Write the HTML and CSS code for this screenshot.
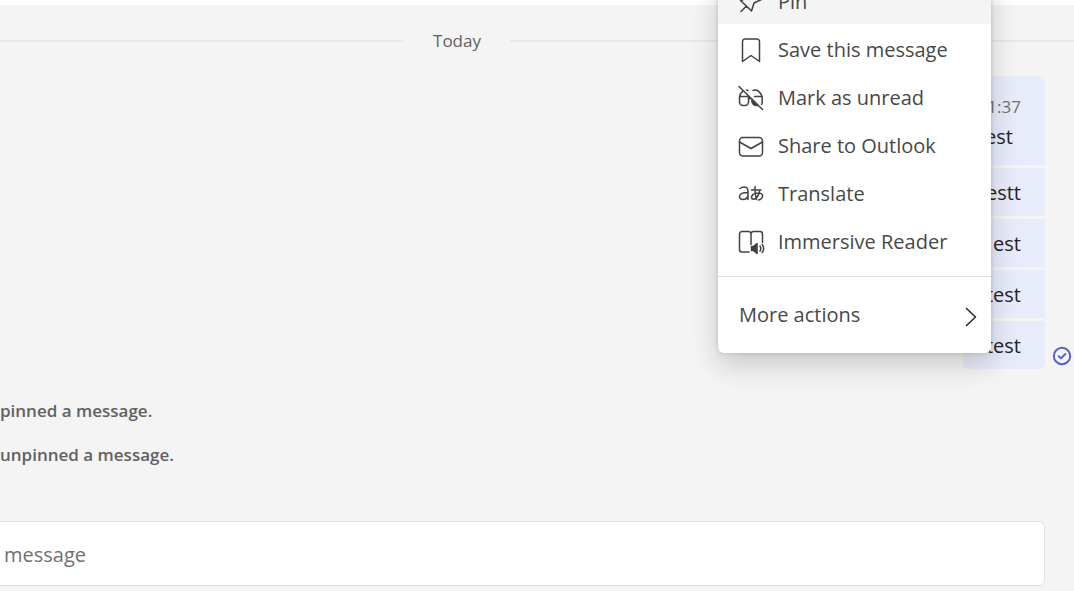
FILE: index.html
```html
<!DOCTYPE html>
<html lang="en">
<head>
<meta charset="utf-8">
<title>Chat</title>
<link rel="stylesheet" href="styles.css">
</head>
<body>
<main class="chat">
  <header class="chat-header"></header>
  <div class="day-divider"><span class="day-label">Today</span></div>
  <section class="thread">
    <div class="bubbles">
      <div class="bubble bubble-first"><time class="time">11:37</time><p class="text">test</p></div>
      <div class="bubble"><p class="text">testt</p></div>
      <div class="bubble"><p class="text">est</p></div>
      <div class="bubble"><p class="text">test</p></div>
      <div class="bubble"><p class="text">test</p></div>
    </div>
    <svg class="sent" viewBox="0 0 20 20" role="img" aria-label="Sent"><circle cx="10" cy="10" r="8.2"/><path d="M6.7 10.3l2.2 2.1 4.4-4.4"/></svg>
  </section>
  <section class="events">
    <p class="event">pinned a message.</p>
    <p class="event">unpinned a message.</p>
  </section>
  <form class="composer">
    <input class="composer-input" type="text" placeholder="message" aria-label="message">
  </form>
</main>
<div class="menu" role="menu">
  <button class="item item-active" type="button" role="menuitem">
    <svg class="icon" viewBox="0 0 26 26"><path d="M3 22.500l5.500-5.500M2.500 11.500l11 10.500 2.500-8 8.500-4M2.500 11.500l7.500-2.500 4.500-8 10 9"/></svg>
    <span>Pin</span>
  </button>
  <button class="item" type="button" role="menuitem">
    <svg class="icon" viewBox="0 0 26 26"><path d="M4.500 24.500V4.500a2.500 2.500 0 0 1 2.500-2.500h12a2.500 2.500 0 0 1 2.500 2.500V24.500L13 18.500z"/></svg>
    <span>Save this message</span>
  </button>
  <button class="item" type="button" role="menuitem">
    <svg class="icon" viewBox="0 0 26 26"><path d="M1 1.500L24.500 24.500M10.500 12v5a3.500 3.500 0 0 1-3.500 3.500H5a3.500 3.500 0 0 1-3.500-3.500v-4.500q.2-4 3.500-6.500M1.500 11.500h9M8.500 5q1 0 1.500.5M15 5.500q.500-.5 1.500-.5h2q3.500 1.500 5.700 6.500v5.500q0 1.500-.7 2.500M16.500 11.500h7.700M11 14q1.500-1 3 0v3q.5 3 4 3.500"/><path class="solid" d="M14.500 15l5.500 5.500q-4.500 0-5.500-3.500z"/></svg>
    <span>Mark as unread</span>
  </button>
  <button class="item" type="button" role="menuitem">
    <svg class="icon" viewBox="0 0 26 26"><rect x="1.500" y="4.500" width="23" height="18.500" rx="3.500"/><path d="M1.500 9L13 15.500 24.500 9"/></svg>
    <span>Share to Outlook</span>
  </button>
  <button class="item" type="button" role="menuitem">
    <svg class="icon" viewBox="0 0 26 26"><path d="M2 7.500q1.500-1.500 4-1.500 4 0 4 4v8.500M10 11.500q-8.500 0-8.500 4 0 3 3.500 3 4 0 5-4M13.500 9h9.500M17 5.500q-.5 7 1.500 13M21.500 10.500q-1.500 7-6 7.700-2 0-2-2.200 1-4 7-4 4.500.3 4 3.500-.5 3-4 3.500"/></svg>
    <span>Translate</span>
  </button>
  <button class="item" type="button" role="menuitem">
    <svg class="icon" viewBox="0 0 26 26"><path d="M11 23H4a2.500 2.500 0 0 1-2.500-2.500V5A2.500 2.500 0 0 1 4 2.500h6.500A2.500 2.500 0 0 1 13 5v10.500M13 5a2.500 2.500 0 0 1 2.500-2.500H22A2.500 2.500 0 0 1 24.500 5v8.500M22 17q1.700 2.500 0 5M24.200 15.500q3 4 0 8"/><path class="solid" d="M13.500 17.500h2l3.500-3v10l-3.500-3h-2z"/></svg>
    <span>Immersive Reader</span>
  </button>
  <hr class="rule">
  <button class="item item-more" type="button" role="menuitem" aria-haspopup="menu">
    <span>More actions</span>
    <svg class="chevron" viewBox="0 0 12 20"><path d="M1.500 1.500L10.500 10l-9 8.500"/></svg>
  </button>
</div>
</body>
</html>
```
FILE: styles.css
```css
* { box-sizing: border-box; }
body {
  margin: 0;
  position: relative;
  overflow: hidden;
  background: #f4f4f4;
  color: #242424;
  font: 20px/28px "Open Sans", "Noto Sans", sans-serif;
}
p { margin: 0; }
.chat {
  min-height: 100vh;
  display: flex;
  flex-direction: column;
}
.chat-header { height: 5px; background: #fff; }
.day-divider {
  display: flex;
  align-items: center;
  gap: 29px;
  margin: 22px 0 21px -160px;
  color: #616161;
  font-size: 17px;
}
.day-divider::before,
.day-divider::after {
  content: "";
  flex: 1;
  height: 2px;
  background: #e9e9e9;
}
.thread {
  display: flex;
  justify-content: flex-end;
  align-items: flex-end;
  gap: 7px;
  padding-right: 2px;
}
.bubbles {
  display: flex;
  flex-direction: column;
  gap: 3px;
  width: 82px;
  border-radius: 6px;
  overflow: hidden;
}
.bubble {
  padding: 11px 24px 9px 8px;
  background: #e8ebfa;
  text-align: right;
}
.bubble-first { padding: 15px 24px 14px 8px; }
.bubble-first .text { padding-right: 8px; }
.time {
  display: block;
  line-height: 32px;
  font-size: 17px;
  color: #707070;
}
.sent { width: 20px; height: 20px; margin-bottom: 3px; }
.sent, .icon, .chevron {
  flex: none;
  fill: none;
  stroke: #424242;
  stroke-width: 1.5;
  stroke-linecap: round;
  stroke-linejoin: round;
}
.sent { stroke: #5b5fc7; stroke-width: 2; }
.events {
  display: flex;
  flex-direction: column;
  gap: 16px;
  padding-top: 28px;
  color: #616161;
  font-size: 17px;
  font-weight: 600;
}
.composer {
  margin: auto 29px 5px -6px;
  display: flex;
}
.composer-input {
  width: 100%;
  height: 65px;
  padding: 2px 9px 0;
  border: 1px solid #e0e0e0;
  border-radius: 6px;
  background: #fff;
  font: inherit;
}
.composer-input::placeholder { color: #707070; opacity: 1; }
.menu {
  position: absolute;
  top: -24px;
  right: 83px;
  width: 273px;
  border-radius: 6px;
  background: #fff;
  box-shadow: 0 12px 28px rgba(0, 0, 0, .18), 0 0 4px rgba(0, 0, 0, .16);
}
.item {
  display: flex;
  align-items: center;
  gap: 14px;
  width: 100%;
  height: 48px;
  padding: 4px 20px 0;
  border: 0;
  background: none;
  color: #484848;
  font: inherit;
  white-space: nowrap;
}
.item-active { background: #f4f4f4; }
.icon { width: 26px; height: 26px; overflow: visible; }
.solid { fill: #424242; }
.rule {
  height: 1px;
  margin: 12px 0 0;
  border: 0;
  background: #e0e0e0;
}
.item-more {
  height: 76px;
  padding: 0 14px 0 21px;
  justify-content: space-between;
}
.chevron { width: 12px; height: 20px; margin-top: 4px; stroke: #242424; }
```
